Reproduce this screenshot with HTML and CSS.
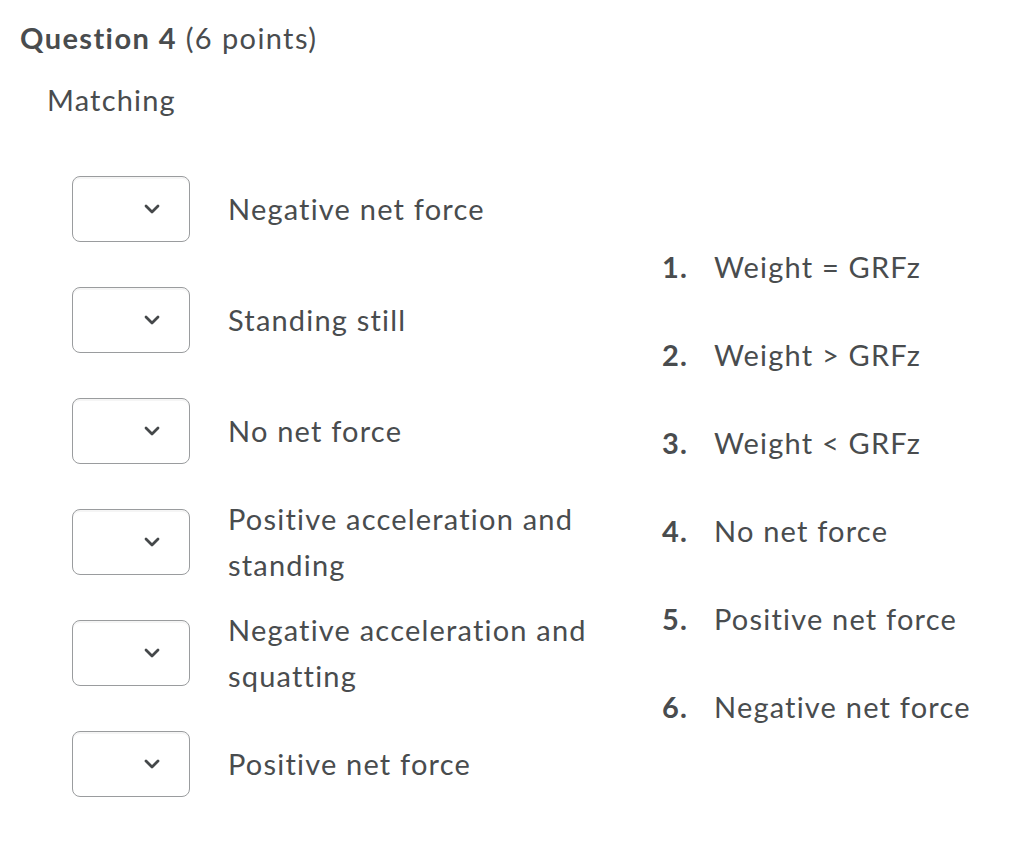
FILE: index.html
```html
<!DOCTYPE html>
<html>
<head>
<meta charset="utf-8">
<link rel="stylesheet" href="styles.css">
</head>
<body>
<div class="page">
  <h1 class="title"><span class="q">Question 4</span> (6 points)</h1>
  <div class="type">Matching</div>
  <div class="match">
    <div class="left">
      <div class="row"><div class="select"><svg class="chev" viewBox="0 0 16 10" width="16" height="10"><path d="M2 2 L8 8 L14 2" fill="none" stroke="#45484a" stroke-width="2.8" stroke-linecap="round" stroke-linejoin="round"/></svg></div><div class="label">Negative net force</div></div>
      <div class="row"><div class="select"><svg class="chev" viewBox="0 0 16 10" width="16" height="10"><path d="M2 2 L8 8 L14 2" fill="none" stroke="#45484a" stroke-width="2.8" stroke-linecap="round" stroke-linejoin="round"/></svg></div><div class="label">Standing still</div></div>
      <div class="row"><div class="select"><svg class="chev" viewBox="0 0 16 10" width="16" height="10"><path d="M2 2 L8 8 L14 2" fill="none" stroke="#45484a" stroke-width="2.8" stroke-linecap="round" stroke-linejoin="round"/></svg></div><div class="label">No net force</div></div>
      <div class="row"><div class="select"><svg class="chev" viewBox="0 0 16 10" width="16" height="10"><path d="M2 2 L8 8 L14 2" fill="none" stroke="#45484a" stroke-width="2.8" stroke-linecap="round" stroke-linejoin="round"/></svg></div><div class="label">Positive acceleration and standing</div></div>
      <div class="row"><div class="select"><svg class="chev" viewBox="0 0 16 10" width="16" height="10"><path d="M2 2 L8 8 L14 2" fill="none" stroke="#45484a" stroke-width="2.8" stroke-linecap="round" stroke-linejoin="round"/></svg></div><div class="label">Negative acceleration and squatting</div></div>
      <div class="row"><div class="select"><svg class="chev" viewBox="0 0 16 10" width="16" height="10"><path d="M2 2 L8 8 L14 2" fill="none" stroke="#45484a" stroke-width="2.8" stroke-linecap="round" stroke-linejoin="round"/></svg></div><div class="label">Positive net force</div></div>
    </div>
    <ol class="right">
      <li><span class="num">1.</span><span>Weight = GRFz</span></li>
      <li><span class="num">2.</span><span>Weight &gt; GRFz</span></li>
      <li><span class="num">3.</span><span>Weight &lt; GRFz</span></li>
      <li><span class="num">4.</span><span>No net force</span></li>
      <li><span class="num">5.</span><span>Positive net force</span></li>
      <li><span class="num">6.</span><span>Negative net force</span></li>
    </ol>
  </div>
</div>
</body>
</html>
```

FILE: styles.css
```css
html, body {
  margin: 0;
  padding: 0;
  background: #ffffff;
}
body {
  font-family: Lato, "Open Sans", sans-serif;
  color: #494c4e;
  font-variant-ligatures: none;
}
.page {
  padding: 18px 0 0 20px;
}
.title {
  margin: 0;
  font-size: 29px;
  font-weight: 400;
  line-height: 40px;
  letter-spacing: 1.4px;
}
.title .q {
  font-weight: 700;
}
.type {
  margin: 22px 0 0 27px;
  font-size: 29px;
  line-height: 40px;
  letter-spacing: 1.2px;
}
.match {
  display: flex;
  align-items: center;
  margin-top: 33px;
}
.left {
  width: 590px;
  padding-left: 52px;
  flex: none;
}
.row {
  display: flex;
  align-items: center;
  height: 111px;
}
.select {
  flex: none;
  width: 87px;
  height: 64px;
  border: 1px solid #9a9c9e;
  border-radius: 8px;
  box-shadow: inset 0 2px 0 rgba(0,0,0,0.04);
  display: flex;
  align-items: center;
  justify-content: flex-end;
  padding-right: 29px;
}
.chev {
  display: block;
}
.label {
  margin-left: 38px;
  font-size: 29px;
  line-height: 46px;
  letter-spacing: 1.2px;
  width: 370px;
}
.right {
  list-style: none;
  margin: 0;
  padding: 0;
}
.right li {
  display: flex;
  height: 88px;
  align-items: center;
  font-size: 29px;
  letter-spacing: 1.2px;
}
.num {
  font-weight: 700;
  width: 52px;
}
```
